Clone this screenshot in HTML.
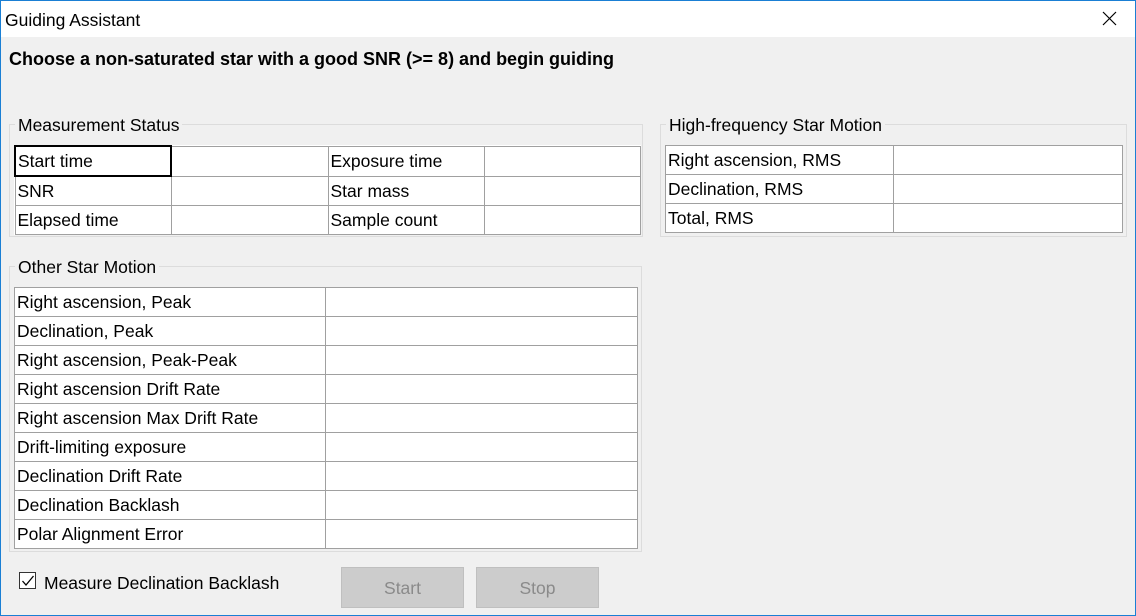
<!DOCTYPE html>
<html><head><style>
*{margin:0;padding:0;box-sizing:border-box}
body{width:1136px;height:616px;background:#f0f0f0;font-family:"Liberation Sans",sans-serif;font-size:17.5px;color:#000;position:relative;overflow:hidden}
.frame{position:absolute;left:0;top:0;width:1136px;height:616px;border:1px solid #1a7fd4;pointer-events:none}
.abs{position:absolute}
.tb{left:0;top:0;width:1136px;height:37px;background:#fff}
.grp{position:absolute;border:1px solid #dcdcdc}
.gl{position:absolute;background:#f0f0f0;padding:0 3px;line-height:18px}
table{position:absolute;border-collapse:collapse;background:#fff;table-layout:fixed}
td{border:1px solid #a0a0a0;height:29px;padding:1px 0 0 2px;white-space:nowrap;line-height:27px;overflow:hidden}
.btn{position:absolute;background:#cccccc;border:1px solid #bfbfbf;color:#8a8a8a;text-align:center;line-height:40px}
</style></head><body>
<div class="abs tb"></div>
<div class="abs" style="left:5px;top:10px">Guiding Assistant</div>
<svg class="abs" style="left:1102px;top:11px" width="15" height="15"><path d="M1 1L14 14M14 1L1 14" stroke="#000" stroke-width="1.2"/></svg>
<div class="abs" style="left:9px;top:49px;font-weight:bold;font-size:18px">Choose a non-saturated star with a good SNR (&gt;= 8) and begin guiding</div>

<div class="grp" style="left:9px;top:124px;width:634px;height:113px"></div>
<div class="gl" style="left:15px;top:116px">Measurement Status</div>
<table style="left:14px;top:145px;width:625px">
<col style="width:156px"><col style="width:157px"><col style="width:156px"><col style="width:156px">
<tr><td style="border:2px solid #000">Start time</td><td></td><td>Exposure time</td><td></td></tr>
<tr><td>SNR</td><td></td><td>Star mass</td><td></td></tr>
<tr><td>Elapsed time</td><td></td><td>Sample count</td><td></td></tr>
</table>

<div class="grp" style="left:660px;top:124px;width:467px;height:113px"></div>
<div class="gl" style="left:666px;top:116px">High-frequency Star Motion</div>
<table style="left:665px;top:145px;width:457px">
<col style="width:228px"><col style="width:229px">
<tr><td>Right ascension, RMS</td><td></td></tr>
<tr><td>Declination, RMS</td><td></td></tr>
<tr><td>Total, RMS</td><td></td></tr>
</table>

<div class="grp" style="left:9px;top:266px;width:633px;height:286px"></div>
<div class="gl" style="left:15px;top:258px">Other Star Motion</div>
<table style="left:14px;top:287px;width:623px">
<col style="width:311px"><col style="width:312px">
<tr><td>Right ascension, Peak</td><td></td></tr>
<tr><td>Declination, Peak</td><td></td></tr>
<tr><td>Right ascension, Peak-Peak</td><td></td></tr>
<tr><td>Right ascension Drift Rate</td><td></td></tr>
<tr><td>Right ascension Max Drift Rate</td><td></td></tr>
<tr><td>Drift-limiting exposure</td><td></td></tr>
<tr><td>Declination Drift Rate</td><td></td></tr>
<tr><td>Declination Backlash</td><td></td></tr>
<tr><td>Polar Alignment Error</td><td></td></tr>
</table>

<div class="abs" style="left:19px;top:572px;width:17px;height:17px;border:1px solid #333;background:#fff"></div>
<svg class="abs" style="left:21px;top:574px" width="14" height="14"><path d="M1.5 7L5 11L12.5 2" stroke="#000" stroke-width="1.3" fill="none"/></svg>
<div class="abs" style="left:44px;top:573px">Measure Declination Backlash</div>
<div class="btn" style="left:341px;top:567px;width:123px;height:41px">Start</div>
<div class="btn" style="left:476px;top:567px;width:123px;height:41px">Stop</div>
<div class="frame"></div>
</body></html>
